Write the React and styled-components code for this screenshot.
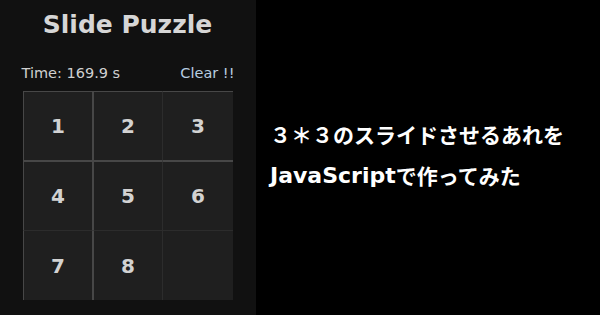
import styled, { createGlobalStyle } from "styled-components";

const GlobalStyle = createGlobalStyle`
  html, body {
    margin: 0;
    padding: 0;
    background: #000;
  }
  body {
    font-family: "DejaVu Sans", Verdana, sans-serif;
  }
`;

const Page = styled.div`
  width: 600px;
  height: 315px;
  display: flex;
  overflow: hidden;
  background: #000;
`;

const Panel = styled.section`
  width: 256px;
  height: 315px;
  background: #111;
  display: flex;
  flex-direction: column;
  align-items: center;
`;

const Title = styled.h1`
  margin: 10px 0 0 -1px;
  font-size: 25px;
  line-height: 30px;
  font-weight: 700;
  color: #d6d6d6;
`;

const Status = styled.div`
  width: 213px;
  margin-top: 24px;
  display: flex;
  justify-content: space-between;
  font-size: 14.5px;
  line-height: 18px;
  color: #d0d0d0;

  .clear {
    color: #b8cde0;
  }
`;

const Board = styled.div`
  margin-top: 9px;
  display: grid;
  grid-template-columns: 70px 70px 70px;
  grid-template-rows: 70px 70px 69px;
`;

const light = "#474747";
const dark = "#2c2c2c";

const Tile = styled.div`
  box-sizing: border-box;
  background: #1f1f1f;
  display: flex;
  align-items: center;
  justify-content: center;
  font-size: 20px;
  font-weight: 700;
  color: #d2d2d2;
  border-left: ${({ col }) => (col < 2 ? `1px solid ${light}` : "none")};
  border-right: ${({ col }) =>
    col === 0 ? `1px solid ${light}` : col === 1 ? `1px solid ${dark}` : "none"};
  border-top: ${({ row }) => (row < 2 ? `1px solid ${light}` : "none")};
  border-bottom: ${({ row }) =>
    row === 0 ? `1px solid ${light}` : row === 1 ? `1px solid ${dark}` : "none"};
`;

const Caption = styled.div`
  flex: 1;
  display: flex;
  flex-direction: column;
  padding: 114px 0 0 14px;
  font-family: "Noto Sans CJK JP", "DejaVu Sans", sans-serif;
  font-size: 21px;
  font-weight: 700;
  color: #fff;
  white-space: nowrap;
`;

const Line = styled.div`
  height: 41px;
  line-height: 41px;
`;

const Latin = styled.span`
  font-family: "DejaVu Sans", "Noto Sans CJK JP", sans-serif;
  font-size: 22px;
  vertical-align: top;
`;

const tiles = [1, 2, 3, 4, 5, 6, 7, 8, null];

export default function App() {
  return (
    <Page>
      <GlobalStyle />
      <Panel>
        <Title>Slide Puzzle</Title>
        <Status>
          <span>Time: 169.9 s</span>
          <span className="clear">Clear !!</span>
        </Status>
        <Board>
          {tiles.map((n, i) => (
            <Tile key={i} row={Math.floor(i / 3)} col={i % 3}>
              {n}
            </Tile>
          ))}
        </Board>
      </Panel>
      <Caption>
        <Line>３＊３のスライドさせるあれを</Line>
        <Line>
          <Latin>JavaScript</Latin>で作ってみた
        </Line>
      </Caption>
    </Page>
  );
}
